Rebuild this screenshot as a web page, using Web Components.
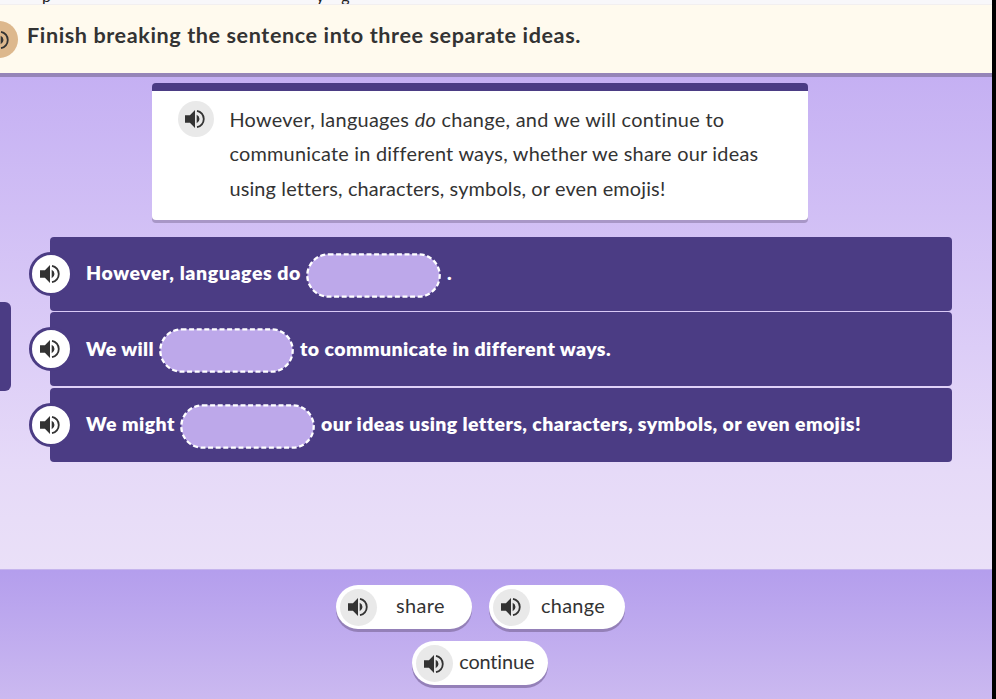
<!DOCTYPE html>
<html lang="en"><head><meta charset="utf-8"><title>Sentence ideas</title>
<style>body{margin:0;width:996px;height:699px;overflow:hidden;background:#000}</style></head><body>
<lesson-screen></lesson-screen>
<script>
const define=(name,html,ready)=>{
  const t=document.createElement('template');t.innerHTML=html;
  customElements.define(name,class extends HTMLElement{
    constructor(){super();this.attachShadow({mode:'open'}).append(t.content.cloneNode(true));}
    connectedCallback(){if(ready)ready(this);}
  });
};
define('speaker-icon',`<style>:host{display:block;width:20px;height:20px;margin-right:1px}svg{display:block;width:100%;height:100%}</style>
<svg viewBox="0 0 20 20"><path d="M0 6.2h4.9L10 1v18l-5.1-5.2H0z" fill="#333"/><path d="M11.7 5.8q2.8 1.4 2.8 4.2t-2.8 4.2z" fill="#333"/><path d="M12 1.8a8.35 8.35 0 0 1 0 16.4" fill="none" stroke="#333" stroke-width="1.8"/></svg>`);
define('audio-button',`<style>:host{display:flex;box-sizing:border-box;width:36px;height:36px;flex:none;border-radius:50%;background:#e9e9e9;align-items:center;justify-content:center}</style><speaker-icon></speaker-icon>`);
/* Spreads the letters of one line so that it fills the given width. */
define('fit-line',`<style>:host{display:block;white-space:pre;flex:none;font-variant-ligatures:none}span{display:inline-block}</style><span><slot></slot></span>`,el=>{
  const s=el.shadowRoot.querySelector('span'),w=+el.getAttribute('w');
  const n=el.textContent.length;
  s.style.letterSpacing=((w-s.getBoundingClientRect().width)/n)+'px';
  el.style.width=w+'px';
});
define('task-header',`<style>:host{display:flex;height:69px;box-sizing:border-box;background:#fffaee;border-top:1px solid #f2eff0;padding-top:16px;font-weight:700;font-size:21.6px;line-height:28px;color:#333}
audio-button{width:37px;height:37px;margin-left:-19px;background:#ddb88d}fit-line{margin-left:9px}</style>
<audio-button></audio-button><fit-line w="554">Finish breaking the sentence into three separate ideas.</fit-line>`);
define('sentence-card',`<style>:host{display:flex;box-sizing:border-box;width:655.5px;height:137px;margin:6px 0 0 152.4px;border-top:8px solid #4b3c84;border-radius:4px;background:#fff;box-shadow:0 3px 0 #a897c7;padding:10px 0 0 25.5px;gap:15.5px;font-size:19.9px;line-height:34.5px;color:#333}div{padding-top:.7px}</style>
<audio-button></audio-button><div><fit-line w="495">However, languages <i>do</i> change, and we will continue to</fit-line><fit-line w="529">communicate in different ways, whether we share our ideas</fit-line><fit-line w="436">using letters, characters, symbols, or even emojis!</fit-line></div>`);
define('drop-blank',`<style>:host{display:block;width:135px;height:45px;margin-top:3px}svg{display:block}</style>
<svg width="135" height="45"><rect x="1.3" y="1.3" width="132.4" height="42.4" rx="21.2" fill="#bda8ea" stroke="#fff" stroke-width="2.3" stroke-dasharray="5 2.6"/></svg>`);
define('idea-row',`<style>:host{display:flex;align-items:center;box-sizing:border-box;width:901.5px;height:73.8px;border-radius:4px;background:#4b3c84;color:#fff;font-weight:800;font-size:19.5px;line-height:30px}
audio-button{width:44px;height:44px;border:3px solid #4b3c84;background:#fff;margin:0 13.5px 0 -21.5px}</style><audio-button></audio-button><slot></slot>`);
define('word-chip',`<style>:host{display:flex;box-sizing:border-box;width:136px;height:44px;border-radius:22px;background:#fff;box-shadow:0 3px 0 #9480b8;padding:4px 8px 0 4px;font-size:19.9px;line-height:33px;color:#333}div{flex:1;display:flex;justify-content:center}audio-button{width:37px;height:37px}</style>
<audio-button></audio-button><div><slot></slot></div>`);
define('lesson-screen',`<style>:host{display:flex;flex-direction:column;width:992px;height:699px;overflow:hidden;position:relative;background:#f8f7fa;font-family:Lato,"Open Sans",sans-serif}
.above{height:4px;flex:none;overflow:hidden;display:flex;font:16px/16px Lato,sans-serif;color:#222}
.above span{margin-top:-12px}
main{height:496px;flex:none;box-sizing:border-box;border-top:4px solid #9685b8;background:linear-gradient(#c5b0f3,#dccdf7 55%,#e6daf8 80%,#eae0f8)}
.rows{display:flex;flex-direction:column;gap:1.6px;margin:17px 0 0 50px}
.rows fit-line{margin-top:-1px}
fit-line+drop-blank{margin-left:5px}drop-blank+fit-line{margin-left:6px}
footer{flex:1;background:linear-gradient(#b49eed,#cbb9f0);display:flex;flex-direction:column;align-items:center;gap:12.7px;padding-top:14.5px;box-sizing:border-box;border-top:1px solid #c5b4ed;padding-right:31.5px}
footer div{display:flex;gap:16.5px}
.tab{position:absolute;left:-10px;top:302px;width:21px;height:89px;border-radius:6px;background:#4b3c84}</style>
<div class="above"><span style="margin-left:42px">p</span><span style="margin-left:265px">y</span><span style="margin-left:17px">g</span></div>
<task-header></task-header>
<main><sentence-card></sentence-card><div class="rows">
<idea-row><fit-line w="215">However, languages do</fit-line><drop-blank></drop-blank><fit-line w="6">.</fit-line></idea-row>
<idea-row><fit-line w="68">We will</fit-line><drop-blank></drop-blank><fit-line w="311">to communicate in different ways.</fit-line></idea-row>
<idea-row><fit-line w="89">We might</fit-line><drop-blank></drop-blank><fit-line w="540">our ideas using letters, characters, symbols, or even emojis!</fit-line></idea-row>
</div></main>
<footer><div><word-chip><fit-line w="49">share</fit-line></word-chip><word-chip><fit-line w="64">change</fit-line></word-chip></div><word-chip><fit-line w="75">continue</fit-line></word-chip></footer><div class="tab"></div>`);
</script></body></html>
